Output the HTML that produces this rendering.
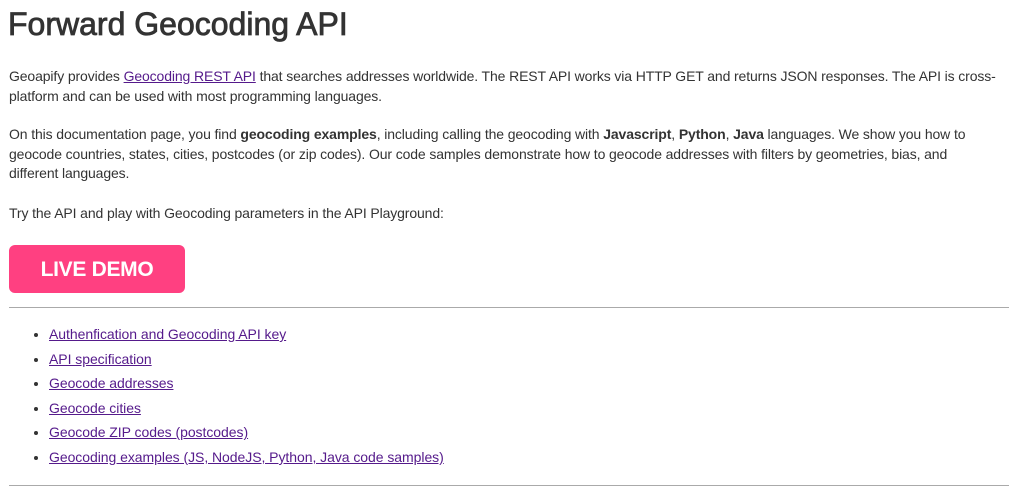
<!DOCTYPE html>
<html><head><style>
body{margin:0;background:#fff;font-family:"Liberation Sans",sans-serif;color:#333;width:1019px;height:501px;overflow:hidden;position:relative}
h1{position:absolute;left:8px;top:6px;margin:0;font-size:32px;font-weight:normal;letter-spacing:0px;color:#333;-webkit-text-stroke:0.8px #333}
p{position:absolute;left:9px;margin:0;font-size:14px;line-height:19.5px;letter-spacing:-0.12px;white-space:nowrap}
a{color:#551a8b}
.btn{position:absolute;left:9px;top:245px;width:176px;height:48px;background:#ff4081;border-radius:6px;color:#fff;font-weight:bold;font-size:21px;text-align:center;line-height:49px;letter-spacing:-0.3px}
hr{position:absolute;left:9px;width:1000px;margin:0;border:0;border-top:1px solid #aaa}
ul{position:absolute;left:0;top:322px;margin:0;padding-left:49px;font-size:14px;letter-spacing:-0.05px}
li{height:24.6px;line-height:24px}
</style></head><body>
<h1>Forward Geocoding API</h1>
<p style="top:67px">Geoapify provides <a href="#">Geocoding REST API</a> that searches addresses worldwide. The REST API works via HTTP GET and returns JSON responses. The API is cross-<br>platform and can be used with most programming languages.</p>
<p style="top:125px">On this documentation page, you find <b>geocoding examples</b>, including calling the geocoding with <b>Javascript</b>, <b>Python</b>, <b>Java</b> languages. We show you how to<br>geocode countries, states, cities, postcodes (or zip codes). Our code samples demonstrate how to geocode addresses with filters by geometries, bias, and<br>different languages.</p>
<p style="top:204px">Try the API and play with Geocoding parameters in the API Playground:</p>
<div class="btn">LIVE DEMO</div>
<hr style="top:307px">
<ul>
<li><a href="#">Authenfication and Geocoding API key</a></li>
<li><a href="#">API specification</a></li>
<li><a href="#">Geocode addresses</a></li>
<li><a href="#">Geocode cities</a></li>
<li><a href="#">Geocode ZIP codes (postcodes)</a></li>
<li><a href="#">Geocoding examples (JS, NodeJS, Python, Java code samples)</a></li>
</ul>
<hr style="top:485px">
</body></html>
